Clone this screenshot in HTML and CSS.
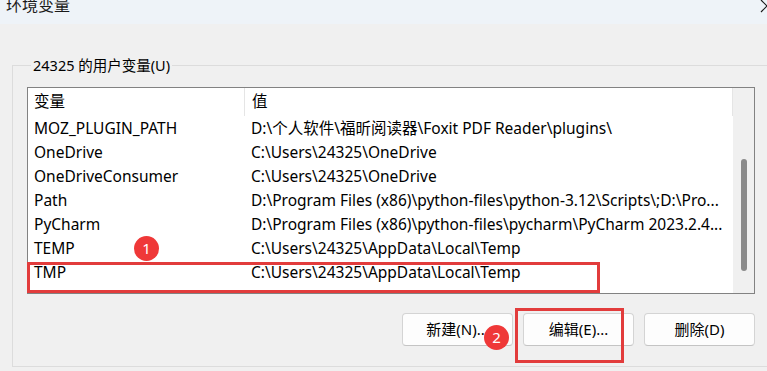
FILE: index.html
```html
<!DOCTYPE html>
<html>
	<head>
		<title>环境变量</title>
		<link rel="stylesheet" href="styles.css">
	</head>
	<body>
		<div id="titlebar">
			<span id="title">环境变量</span>
			<svg id="close" width="14" height="14" viewBox="0 0 14 14"><path d="M1 1 L13 13 M13 1 L1 13" stroke="#1a1a1a" stroke-width="1.2" fill="none"/></svg>
		</div>
		<div id="main">
			<fieldset id="group">
				<legend>24325 的用户变量(U)</legend>
				<div id="listbox">
					<div id="list">
						<div class="row head">
							<div class="name">变量</div>
							<div class="value">值</div>
						</div>
						<div class="row"><div class="name">MOZ_PLUGIN_PATH</div><div class="value">D:\个人软件\福昕阅读器\Foxit PDF Reader\plugins\</div></div>
						<div class="row"><div class="name">OneDrive</div><div class="value">C:\Users\24325\OneDrive</div></div>
						<div class="row"><div class="name">OneDriveConsumer</div><div class="value">C:\Users\24325\OneDrive</div></div>
						<div class="row"><div class="name">Path</div><div class="value">D:\Program Files (x86)\python-files\python-3.12\Scripts\;D:\Pro...</div></div>
						<div class="row"><div class="name">PyCharm</div><div class="value">D:\Program Files (x86)\python-files\pycharm\PyCharm 2023.2.4...</div></div>
						<div class="row"><div class="name">TEMP</div><div class="value">C:\Users\24325\AppData\Local\Temp</div></div>
						<div class="row"><div class="name">TMP</div><div class="value">C:\Users\24325\AppData\Local\Temp</div></div>
					</div>
					<div id="scrollbar"><div id="thumb"></div></div>
				</div>
				<div id="buttons">
					<div class="btn">新建(N)...</div>
					<div class="btn">编辑(E)...</div>
					<div class="btn">删除(D)</div>
				</div>
			</fieldset>
			<div class="mark" id="mark1"></div>
			<div class="mark" id="mark2"></div>
			<div class="badge" id="badge1">1</div>
			<div class="badge" id="badge2">2</div>
		</div>
	</body>
</html>
```

FILE: styles.css
```css
html, body{
	margin: 0;
	padding: 0;
	width: 767px;
	height: 371px;
	overflow: hidden;
	background: #f0f0f0;
	font-family: "Noto Sans", "Noto Sans CJK SC", sans-serif;
	font-size: 15.5px;
	color: #000;
}
#titlebar{
	height: 24px;
	background: #eef3f8;
	position: relative;
	overflow: hidden;
}
#title{
	display: block;
	padding-left: 6px;
	margin-top: -4px;
	font-size: 16px;
	line-height: 18px;
	color: #1a1a1a;
}
#close{
	position: absolute;
	top: -1px;
	right: -7px;
}
#main{
	position: relative;
	height: 347px;
	padding: 31px 0 0 12px;
	box-sizing: border-box;
}
#group{
	margin: 0;
	width: 780px;
	height: 312px;
	box-sizing: border-box;
	border: 1px solid #dcdcdc;
	padding: 12px 0 0 14px;
}
#group legend{
	padding: 0 2px;
	margin-left: 4px;
	font-size: 14.5px;
	line-height: 20px;
}
#listbox{
	width: 728px;
	height: 207px;
	box-sizing: border-box;
	border: 1px solid #828282;
	background: #fff;
	display: flex;
}
#list{
	flex: 1;
}
.row{
	display: flex;
	height: 24px;
	line-height: 25px;
	white-space: nowrap;
}
.row.head{
	height: 28px;
	line-height: 27px;
	border-right: 1px solid #e5e5e5;
}
.name{
	width: 210px;
	padding-left: 6px;
}
.value{
	padding-left: 7px;
}
.head .name{
	border-right: 1px solid #e5e5e5;
}
#scrollbar{
	width: 21px;
	background: #f0f0f0;
	padding-top: 71px;
	box-sizing: border-box;
}
#thumb{
	width: 6px;
	height: 112px;
	margin-left: 8px;
	border-radius: 3px;
	background: #8a8a8a;
}
#buttons{
	display: flex;
	justify-content: flex-end;
	gap: 10px;
	width: 728px;
	margin-top: 19px;
}
.btn{
	width: 111px;
	height: 33px;
	box-sizing: border-box;
	border: 1px solid #d4d4d4;
	border-bottom-color: #c4c4c4;
	border-radius: 4px;
	background: #fdfdfd;
	text-align: center;
	line-height: 31px;
	font-size: 15px;
}
.mark{
	position: absolute;
	border: 3px solid #e23c3c;
	box-sizing: border-box;
}
#mark1{
	left: 27px;
	top: 238px;
	width: 573px;
	height: 31px;
}
#mark2{
	left: 515px;
	top: 284px;
	width: 109px;
	height: 55px;
}
.badge{
	position: absolute;
	width: 25px;
	height: 25px;
	border-radius: 50%;
	background: #ef3838;
	color: #fff;
	font-size: 15px;
	line-height: 25px;
	text-align: center;
}
#badge1{
	left: 134px;
	top: 212px;
}
#badge2{
	left: 484px;
	top: 301px;
}
```
